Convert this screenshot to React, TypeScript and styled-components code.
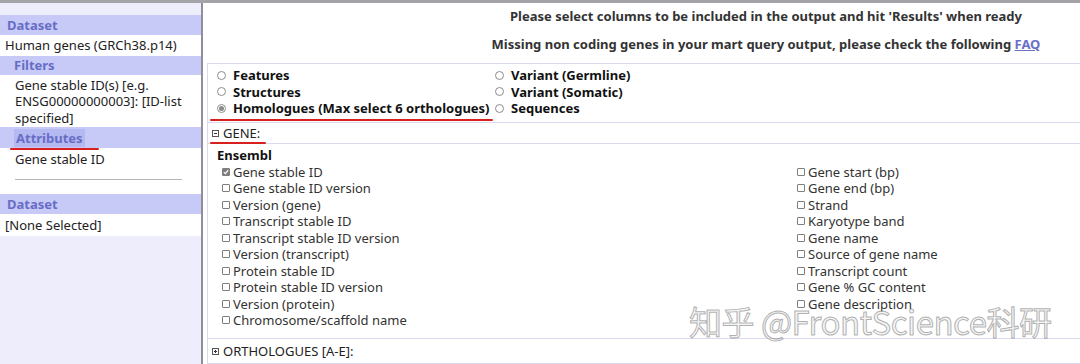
import React from "react";
import styled, { createGlobalStyle } from "styled-components";

const Global = createGlobalStyle`
  html, body { margin: 0; padding: 0; background: #fff; }
  body { font-family: "Noto Sans", "Open Sans", sans-serif; color: #222; font-size: 13px; }
  * { box-sizing: border-box; }
`;

const Page = styled.div`
  position: relative;
  width: 1080px;
  height: 364px;
  overflow: hidden;
  border-top: 3px solid #a4a4a8;
  display: flex;
`;

const Sidebar = styled.aside`
  width: 203px;
  flex: none;
  background: #ededfb;
  border-right: 2px solid #8e8e9c;
  padding-top: 12px;
  display: flex;
  flex-direction: column;
`;

const SideHeader = styled.div<{ $indent?: boolean; $h?: number }>`
  background: #c7caf6;
  color: #676dc6;
  font-weight: 700;
  font-size: 13px;
  height: ${(p) => p.$h ?? 20}px;
  flex: none;
  display: flex;
  align-items: center;
  padding-left: ${(p) => (p.$indent ? 14 : 7)}px;
`;

const ActiveTab = styled.span`
  position: relative;
  background: #b5b9f1;
  padding: 0 2px;
  &::after {
    content: "";
    position: absolute;
    left: -4px;
    right: -14px;
    bottom: -3px;
    height: 2px;
    background: #d8201f;
    border-radius: 1px;
  }
`;

const SideBody = styled.div<{ $indent?: boolean; $pt?: number; $pb?: number }>`
  background: #fff;
  color: #222;
  font-size: 13px;
  line-height: 16.5px;
  padding: ${(p) => p.$pt ?? 2}px 6px ${(p) => p.$pb ?? 2}px ${(p) => (p.$indent ? 15 : 5)}px;
`;

const SideRule = styled.hr`
  border: none;
  border-top: 1px solid #b4b4b8;
  margin: 11px 13px 14px 0;
`;

const Main = styled.main`
  flex: 1;
  min-width: 0;
  padding-left: 4px;
  display: flex;
  flex-direction: column;
`;

const Intro = styled.div`
  padding: 4px 0 10px 245px;
  text-align: center;
  font-weight: 700;
  color: #333;
  font-size: 13px;
  line-height: 18px;
  white-space: nowrap;
  display: flex;
  flex-direction: column;
  gap: 10px;
`;

const FaqLink = styled.a`
  color: #6a6fc8;
  text-decoration: underline;
`;

const Box = styled.section`
  border-top: 1px solid #dadaec;
  border-left: 1px solid #dadaec;
`;

const RadioGrid = styled.div`
  display: grid;
  grid-template-columns: 278px auto;
  grid-auto-flow: column;
  grid-template-rows: repeat(3, 16.5px);
  padding: 3px 0 5px 9px;
  border-bottom: 1px solid #dadaec;
`;

const RadioRow = styled.label<{ $marked?: boolean }>`
  position: relative;
  display: flex;
  align-items: center;
  gap: 7px;
  font-weight: 700;
  color: #111;
  white-space: nowrap;
  line-height: 16.5px;
  ${(p) =>
    p.$marked &&
    `&::after {
      content: "";
      position: absolute;
      left: -7px;
      width: 283px;
      bottom: -4px;
      height: 2px;
      background: #d8201f;
      border-radius: 1px;
    }`}
`;

const RadioDot = styled.span<{ $on?: boolean }>`
  width: 9px;
  height: 9px;
  flex: none;
  border-radius: 50%;
  border: 1px solid #8d8d8d;
  background: #fff;
  position: relative;
  ${(p) =>
    p.$on &&
    `&::after {
      content: "";
      position: absolute;
      left: 1px; top: 1px;
      width: 5px; height: 5px;
      border-radius: 50%;
      background: #8a8a8a;
    }`}
`;

const SectionHead = styled.div<{ $marked?: boolean; $h: number }>`
  position: relative;
  height: ${(p) => p.$h}px;
  display: flex;
  align-items: center;
  gap: 4px;
  padding-left: 4px;
  color: #222;
  font-size: 13px;
  border-bottom: 1px solid #dadaec;
  ${(p) =>
    p.$marked &&
    `&::after {
      content: "";
      position: absolute;
      left: 2px;
      width: 56px;
      bottom: -1px;
      height: 2px;
      background: #d8201f;
      border-radius: 1px;
    }`}
`;

const Toggle = styled.span<{ $open?: boolean }>`
  width: 7px;
  height: 7px;
  flex: none;
  border: 1px solid #555;
  position: relative;
  margin-top: 2px;
  &::before {
    content: "";
    position: absolute;
    left: 1px; right: 1px; top: 2px;
    height: 1px;
    background: #333;
  }
  ${(p) =>
    !p.$open &&
    `&::after {
      content: "";
      position: absolute;
      top: 1px; bottom: 1px; left: 2px;
      width: 1px;
      background: #333;
    }`}
`;

const SectionBody = styled.div`
  padding: 3px 0 9px 9px;
  border-bottom: 1px solid #dadaec;
`;

const GroupTitle = styled.div`
  font-weight: 700;
  color: #111;
  line-height: 17px;
`;

const Columns = styled.div`
  display: flex;
  padding-left: 5px;
`;

const Column = styled.div<{ $w?: number }>`
  width: ${(p) => (p.$w ? `${p.$w}px` : "auto")};
  display: flex;
  flex-direction: column;
`;

const CheckRow = styled.label`
  display: flex;
  align-items: center;
  gap: 3px;
  height: 16.5px;
  color: #333;
  white-space: nowrap;
`;

const Box8 = styled.span<{ $on?: boolean }>`
  width: 8px;
  height: 8px;
  flex: none;
  border: 1px solid #7e7e7e;
  border-radius: 1px;
  background: ${(p) => (p.$on ? "#7e7e7e" : "#fff")};
  display: flex;
  align-items: center;
  justify-content: center;
`;

const Watermark = styled.div`
  position: absolute;
  left: 689px;
  top: 299px;
  font-family: "Noto Sans CJK SC", "Noto Sans", sans-serif;
  font-size: 33px;
  line-height: 38px;
  color: rgba(235, 235, 235, 0.55);
  -webkit-text-stroke: 1px rgba(115, 115, 115, 0.55);
  letter-spacing: -0.5px;
  white-space: nowrap;
  pointer-events: none;
`;

const Check = ({ on, label }: { on?: boolean; label: string }) => (
  <CheckRow>
    <Box8 $on={on}>
      {on && (
        <svg width="6" height="6" viewBox="0 0 6 6">
          <path d="M0.8 3.1 L2.4 4.6 L5.2 1.2" stroke="#fff" strokeWidth="1.2" fill="none" />
        </svg>
      )}
    </Box8>
    {label}
  </CheckRow>
);

const col1 = [
  "Gene stable ID",
  "Gene stable ID version",
  "Version (gene)",
  "Transcript stable ID",
  "Transcript stable ID version",
  "Version (transcript)",
  "Protein stable ID",
  "Protein stable ID version",
  "Version (protein)",
  "Chromosome/scaffold name",
];

const col2 = [
  "Gene start (bp)",
  "Gene end (bp)",
  "Strand",
  "Karyotype band",
  "Gene name",
  "Source of gene name",
  "Transcript count",
  "Gene % GC content",
  "Gene description",
];

export default function App() {
  return (
    <>
      <Global />
      <Page>
        <Sidebar>
          <SideHeader>Dataset</SideHeader>
          <SideBody $pt={2} $pb={2}>Human genes (GRCh38.p14)</SideBody>
          <SideHeader $indent $h={19}>Filters</SideHeader>
          <SideBody $indent $pt={2} $pb={1}>
            Gene stable ID(s) [e.g. ENSG00000000003]: [ID-list specified]
          </SideBody>
          <SideHeader $indent $h={21}>
            <ActiveTab>Attributes</ActiveTab>
          </SideHeader>
          <SideBody $indent $pt={3} $pb={0}>
            Gene stable ID
            <SideRule />
          </SideBody>
          <SideHeader>Dataset</SideHeader>
          <SideBody $pt={3} $pb={3}>[None Selected]</SideBody>
        </Sidebar>
        <Main>
          <Intro>
            <div>Please select columns to be included in the output and hit 'Results' when ready</div>
            <div>
              Missing non coding genes in your mart query output, please check the following{" "}
              <FaqLink>FAQ</FaqLink>
            </div>
          </Intro>
          <Box>
            <RadioGrid>
              <RadioRow><RadioDot />Features</RadioRow>
              <RadioRow><RadioDot />Structures</RadioRow>
              <RadioRow $marked><RadioDot $on />Homologues (Max select 6 orthologues)</RadioRow>
              <RadioRow><RadioDot />Variant (Germline)</RadioRow>
              <RadioRow><RadioDot />Variant (Somatic)</RadioRow>
              <RadioRow><RadioDot />Sequences</RadioRow>
            </RadioGrid>
            <SectionHead $marked $h={21}>
              <Toggle $open />GENE:
            </SectionHead>
            <SectionBody>
              <GroupTitle>Ensembl</GroupTitle>
              <Columns>
                <Column $w={575}>
                  {col1.map((l, i) => (
                    <Check key={l} label={l} on={i === 0} />
                  ))}
                </Column>
                <Column>
                  {col2.map((l) => (
                    <Check key={l} label={l} />
                  ))}
                </Column>
              </Columns>
            </SectionBody>
            <SectionHead $h={25}>
              <Toggle />ORTHOLOGUES [A-E]:
            </SectionHead>
          </Box>
        </Main>
        <Watermark>知乎 @FrontScience科研</Watermark>
      </Page>
    </>
  );
}
